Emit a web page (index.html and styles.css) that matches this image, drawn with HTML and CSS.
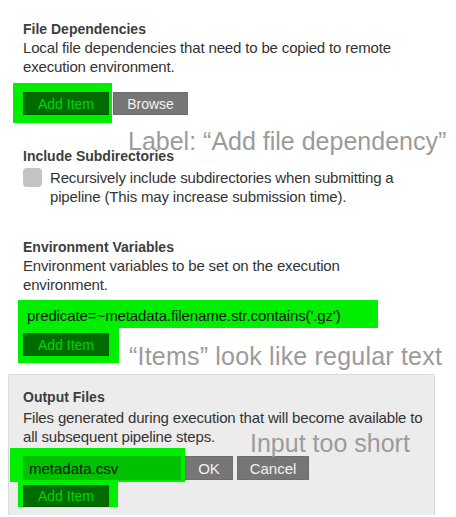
FILE: index.html
```html
<!DOCTYPE html>
<html lang="en">
<head>
<meta charset="utf-8">
<title>Pipeline step settings</title>
<link rel="stylesheet" href="styles.css">
</head>
<body>
<div class="page">
  <section class="field field-files">
    <h3 class="field-title">File Dependencies</h3>
    <p class="field-desc">Local file dependencies that need to be copied to remote execution environment.</p>
    <div class="btn-row">
      <span class="hl hl-files"><button class="btn btn-add" type="button">Add Item</button></span>
      <button class="btn btn-gray btn-browse" type="button">Browse</button>
    </div>
  </section>

  <section class="field field-subdirs">
    <h3 class="field-title">Include Subdirectories</h3>
    <label class="check-row">
      <span class="checkbox"></span>
      <span class="check-text">Recursively include subdirectories when submitting a pipeline (This may increase submission time).</span>
    </label>
  </section>

  <section class="field field-env">
    <h3 class="field-title">Environment Variables</h3>
    <p class="field-desc">Environment variables to be set on the execution environment.</p>
    <div class="env-item">predicate=~metadata.filename.str.contains('.gz')</div>
    <div class="hl hl-env"><button class="btn btn-add" type="button">Add Item</button></div>
  </section>

  <section class="panel">
    <h3 class="field-title">Output Files</h3>
    <p class="field-desc">Files generated during execution that will become available to all subsequent pipeline steps.</p>
    <div class="edit-row">
      <span class="hl hl-input"><span class="text-input">metadata.csv</span></span>
      <button class="btn btn-gray btn-ok" type="button">OK</button>
      <button class="btn btn-gray btn-cancel" type="button">Cancel</button>
    </div>
    <div class="hl hl-out"><button class="btn btn-add btn-add-short" type="button">Add Item</button></div>
  </section>

  <div class="note note-label">Label: “Add file dependency”</div>
  <div class="note note-items">“Items” look like regular text</div>
  <div class="note note-short">Input too short</div>
</div>
</body>
</html>
```

FILE: styles.css
```css
html, body {
  margin: 0;
  padding: 0;
  background: #ffffff;
}

body {
  font-family: "Liberation Sans", Arial, sans-serif;
  color: #333333;
  overflow: hidden;
}

.page {
  position: relative;
  padding: 21px 40px 0 23px;
  height: 517px;
  box-sizing: border-box;
  overflow: hidden;
}

.field-title {
  margin: 0;
  font-size: 14px;
  line-height: 17px;
  font-weight: 700;
  color: #3d3d3d;
}

.field-desc {
  margin: 0;
  font-size: 15px;
  line-height: 19px;
  letter-spacing: -0.16px;
  color: #333333;
}

.btn {
  font-family: "Liberation Sans", Arial, sans-serif;
  font-size: 14px;
  border: 0;
  margin: 0;
  padding: 0;
  display: block;
  box-sizing: border-box;
  text-align: center;
  cursor: pointer;
}

.btn-add {
  width: 86px;
  height: 23px;
  background: #006c00;
  border: 1px solid #005e00;
  color: #00d400;
}

.btn-gray {
  height: 23px;
  background: #767676;
  color: #f2f2f2;
  border: 1px solid #6e6e6e;
}

.hl {
  background: #00ee00;
}

/* File dependencies */
.btn-row {
  display: flex;
  align-items: flex-start;
  margin-top: 7px;
}

.hl-files {
  display: block;
  padding: 9px 3px 8px 10px;
  margin-left: -10px;
}

.btn-browse {
  width: 75px;
  margin: 9px 0 0 1px;
}

/* Subdirectories */
.field-subdirs {
  margin-top: 25px;
}

.check-row {
  display: flex;
  align-items: flex-start;
  margin-top: 3px;
}

.checkbox {
  flex: none;
  width: 19px;
  height: 19px;
  border-radius: 4px;
  background: #c4c4c4;
  margin-right: 8px;
}

.check-text {
  font-size: 15px;
  line-height: 19px;
  letter-spacing: -0.16px;
}

/* Environment variables */
.field-env {
  margin-top: 33px;
}

.env-item {
  margin: 6px 0 0 -5px;
  width: 360px;
  height: 28px;
  box-sizing: border-box;
  padding: 4px 0 0 9px;
  font-size: 15px;
  line-height: 24px;
  letter-spacing: -0.1px;
  color: #111111;
  background: #00ee00;
}

.hl-env {
  width: fit-content;
  margin-left: -5px;
  padding: 5px 10px 7px 5px;
}

/* Output files panel */
.panel {
  margin: 11px -19px 0 -15px;
  padding: 14px 6px 8px 14px;
  background: #ececec;
  border: 1px solid #dadada;
  border-bottom: 0;
}

.panel .field-desc {
  margin-top: 2px;
}

.edit-row {
  display: flex;
  align-items: flex-start;
  margin-top: 2px;
}

.hl-input {
  display: block;
  margin-left: -13px;
  padding: 8px 4px 2px 13px;
}

.text-input {
  display: block;
  width: 158px;
  height: 24px;
  box-sizing: border-box;
  padding-left: 6px;
  font-size: 15px;
  line-height: 25px;
  color: #111111;
  background: #00c000;
}

.btn-ok {
  width: 48px;
  height: 24px;
  margin-top: 8px;
  font-size: 15px;
}

.btn-cancel {
  width: 72px;
  height: 24px;
  margin: 8px 0 0 4px;
  font-size: 15px;
}

.hl-out {
  width: fit-content;
  margin-left: -5px;
  padding: 3px 9px 0 5px;
}

.btn-add-short {
  height: 22px;
}

/* Annotations overlaid on the UI */
.note {
  position: absolute;
  font-family: "Liberation Sans", Arial, sans-serif;
  font-size: 25px;
  line-height: 25px;
  color: #9b9b9b;
  white-space: nowrap;
}

.note-label {
  left: 128px;
  top: 129px;
}

.note-items {
  left: 129px;
  top: 344px;
  letter-spacing: 0.2px;
}

.note-short {
  left: 250px;
  top: 431px;
}
```
